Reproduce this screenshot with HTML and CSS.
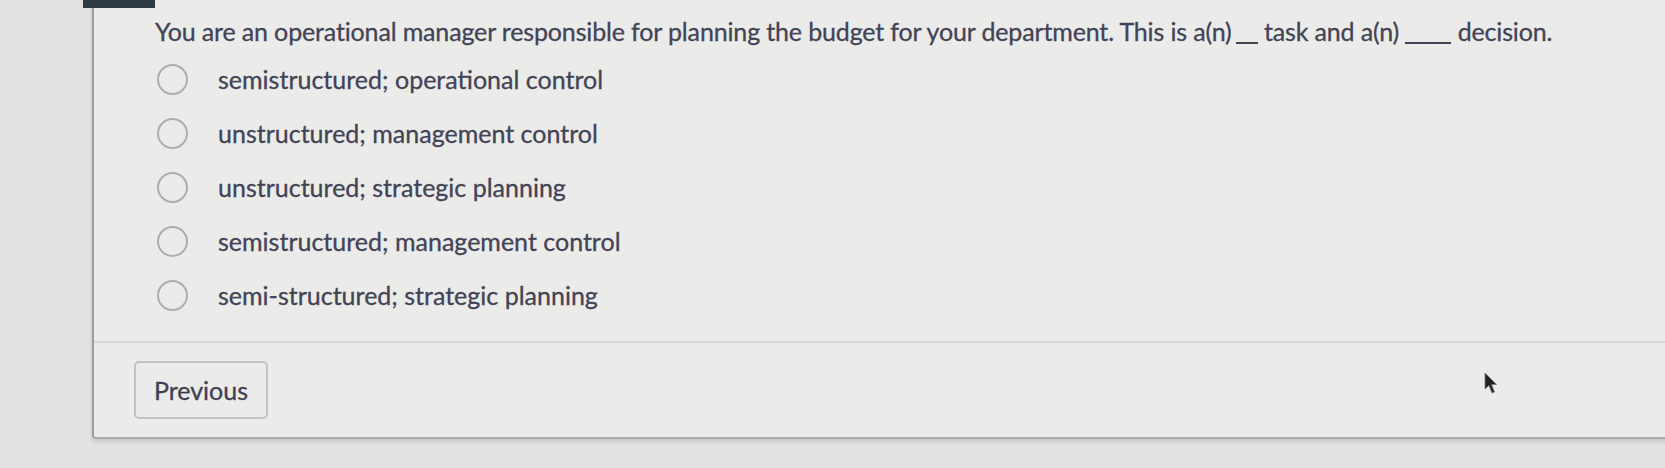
FILE: index.html
```html
<!DOCTYPE html>
<html>
<head>
    <title>Quiz Question</title>
    <link rel="stylesheet" href="styles.css">
</head>
<body>
    <div class="tab-mark"></div>

    <div class="question-card">
        <div class="question-text">
            You are an operational manager responsible for planning the budget for your department. This is a(n)<span class="blank short"></span> task and a(n) <span class="blank long"></span> decision.
        </div>

        <div class="options">
            <label class="option"><span class="radio"></span><span class="option-text">semistructured; operational control</span></label>
            <label class="option"><span class="radio"></span><span class="option-text">unstructured; management control</span></label>
            <label class="option"><span class="radio"></span><span class="option-text">unstructured; strategic planning</span></label>
            <label class="option"><span class="radio"></span><span class="option-text">semistructured; management control</span></label>
            <label class="option"><span class="radio"></span><span class="option-text">semi-structured; strategic planning</span></label>
        </div>

        <div class="card-footer">
            <button class="prev-btn">Previous</button>
        </div>
    </div>

    <svg class="cursor" width="14" height="24" viewBox="0 0 14 24">
        <path d="M1 1 L1 17 L5 13.5 L8 21 L10.5 20 L7.5 12.5 L12.5 12.5 Z" fill="#222" stroke="#777" stroke-width="0.8"/>
    </svg>
</body>
</html>
```

FILE: styles.css
```css
body {
    margin: 0;
    background-color: #e2e2e0;
    color: #434356;
    font-family: Lato, "Open Sans", Arial, sans-serif;
    height: 468px;
    overflow: hidden;
    position: relative;
}
.tab-mark {
    position: absolute;
    top: 0;
    left: 83px;
    width: 72px;
    height: 8px;
    background: #2e3b45;
}
.question-card {
    margin-left: 92px;
    width: 1700px;
    background: #ebebe9;
    border-left: 2px solid #9c9c9c;
    border-bottom: 2px solid #a9a9a9;
    border-bottom-left-radius: 4px;
    box-shadow: 0 3px 4px rgba(0, 0, 0, 0.12);
    padding-top: 16px;
}
.question-text {
    font-size: 25px;
    line-height: 30px;
    padding-left: 61px;
    white-space: nowrap;
    letter-spacing: -0.15px;
    -webkit-text-stroke: 0.3px #434356;
}
.blank {
    display: inline-block;
    border-bottom: 2px solid #434356;
    vertical-align: baseline;
    margin-bottom: -3px;
}
.blank.short {
    width: 22px;
    margin-left: 4px;
}
.blank.long {
    width: 46px;
}
.options {
    margin-top: 6px;
    padding-left: 63px;
}
.option {
    display: flex;
    align-items: center;
    height: 54px;
    gap: 30px;
    font-size: 25px;
    -webkit-text-stroke: 0.3px #434356;
}
.radio {
    width: 27px;
    height: 27px;
    border: 2px solid #adadad;
    border-radius: 50%;
    flex-shrink: 0;
}
.card-footer {
    margin-top: 19px;
    border-top: 2px solid #d9d9d7;
    padding: 18px 0 18px 40px;
}
.prev-btn {
    font-family: Lato, "Open Sans", Arial, sans-serif;
    font-size: 25px;
    color: #3f3f52;
    -webkit-text-stroke: 0.3px #3f3f52;
    background: #ebebe9;
    border: 2px solid #c2c2c2;
    border-radius: 5px;
    height: 58px;
    width: 134px;
    padding: 0;
    cursor: pointer;
}
.cursor {
    position: absolute;
    left: 1484px;
    top: 372px;
}
```
